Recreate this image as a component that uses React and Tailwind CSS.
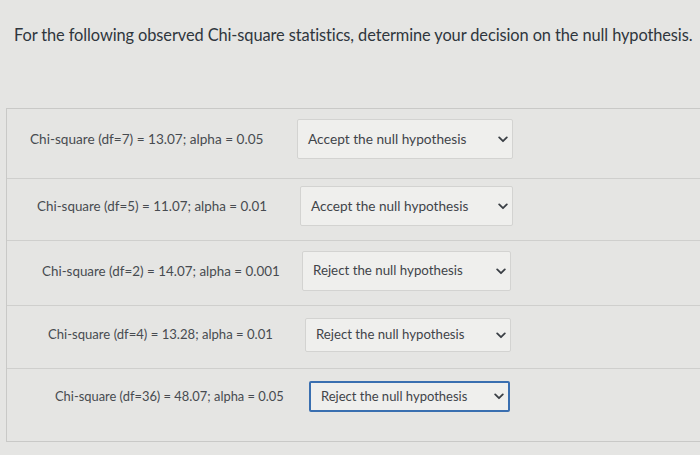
import React from "react";

const rows = [
  { label: "Chi-square (df=7) = 13.07; alpha = 0.05", value: "Accept the null hypothesis", h: "h-[70px]", pt: "pt-[10px]", lp: "pl-[23px]", lw: "w-[290px]", sw: "w-[216px]", sh: "h-[40px]", lf: "text-[13.6px]", vf: "text-[13.7px]", focus: false },
  { label: "Chi-square (df=5) = 11.07; alpha = 0.01", value: "Accept the null hypothesis", h: "h-[62px]", pt: "pt-[7px]", lp: "pl-[30px]", lw: "w-[293px]", sw: "w-[213px]", sh: "h-[40px]", lf: "text-[13.4px]", vf: "text-[13.6px]", focus: false },
  { label: "Chi-square (df=2) = 14.07; alpha = 0.001", value: "Reject the null hypothesis", h: "h-[65px]", pt: "pt-[10px]", lp: "pl-[35px]", lw: "w-[295px]", sw: "w-[209px]", sh: "h-[40px]", lf: "text-[13.4px]", vf: "text-[13.3px]", focus: false },
  { label: "Chi-square (df=4) = 13.28; alpha = 0.01", value: "Reject the null hypothesis", h: "h-[63px]", pt: "pt-[12px]", lp: "pl-[41px]", lw: "w-[298px]", sw: "w-[206px]", sh: "h-[34px]", lf: "text-[13.1px]", vf: "text-[13.2px]", focus: false },
  { label: "Chi-square (df=36) = 48.07; alpha = 0.05", value: "Reject the null hypothesis", h: "h-[72px]", pt: "pt-[12px]", lp: "pl-[48px]", lw: "w-[302px]", sw: "w-[201px]", sh: "h-[31px]", lf: "text-[12.9px]", vf: "text-[13px]", focus: true },
];

function Chevron() {
  return (
    <svg width="10" height="7" viewBox="0 0 10 7" className="shrink-0">
      <path d="M1.2 1.4 L5 5.2 L8.8 1.4" fill="none" stroke="#3a3f45" strokeWidth="1.8" strokeLinecap="round" strokeLinejoin="round" />
    </svg>
  );
}

export default function App() {
  return (
    <div
      className="w-[700px] h-[455px] overflow-hidden bg-[#e5e5e3] text-[#3b3f44]"
      style={{ fontFamily: "Lato, 'Open Sans', sans-serif" }}
    >
      <div className="pt-[25px] pl-[14px] text-[16.4px] leading-[20px] text-[#2f363d] tracking-[-0.1px] whitespace-nowrap">
        For the following observed Chi-square statistics, determine your decision on the null hypothesis.
      </div>
      <div className="mt-[63px] ml-[6px] border-l border-t border-b border-[#c9c9c7]">
        {rows.map((r, i) => (
          <div
            key={i}
            className={`${r.h} ${r.pt} flex items-start ${i < rows.length - 1 ? "border-b border-[#cfcfcd]" : ""}`}
          >
            <div className={`${r.lw} ${r.lp} ${r.sh} ${r.lf} shrink-0 flex items-center text-[#474b50] whitespace-nowrap`}>
              {r.label}
            </div>
            <div
              className={`${r.sw} ${r.sh} shrink-0 flex items-center justify-between pl-[10px] pr-[4px] bg-[#efefed] rounded-[2px] ${
                r.focus ? "border-2 border-[#3a6fb0]" : "border border-[#d3d3d1]"
              }`}
            >
              <span className={`${r.vf} text-[#3f4449] whitespace-nowrap`}>{r.value}</span>
              <Chevron />
            </div>
          </div>
        ))}
      </div>
    </div>
  );
}
